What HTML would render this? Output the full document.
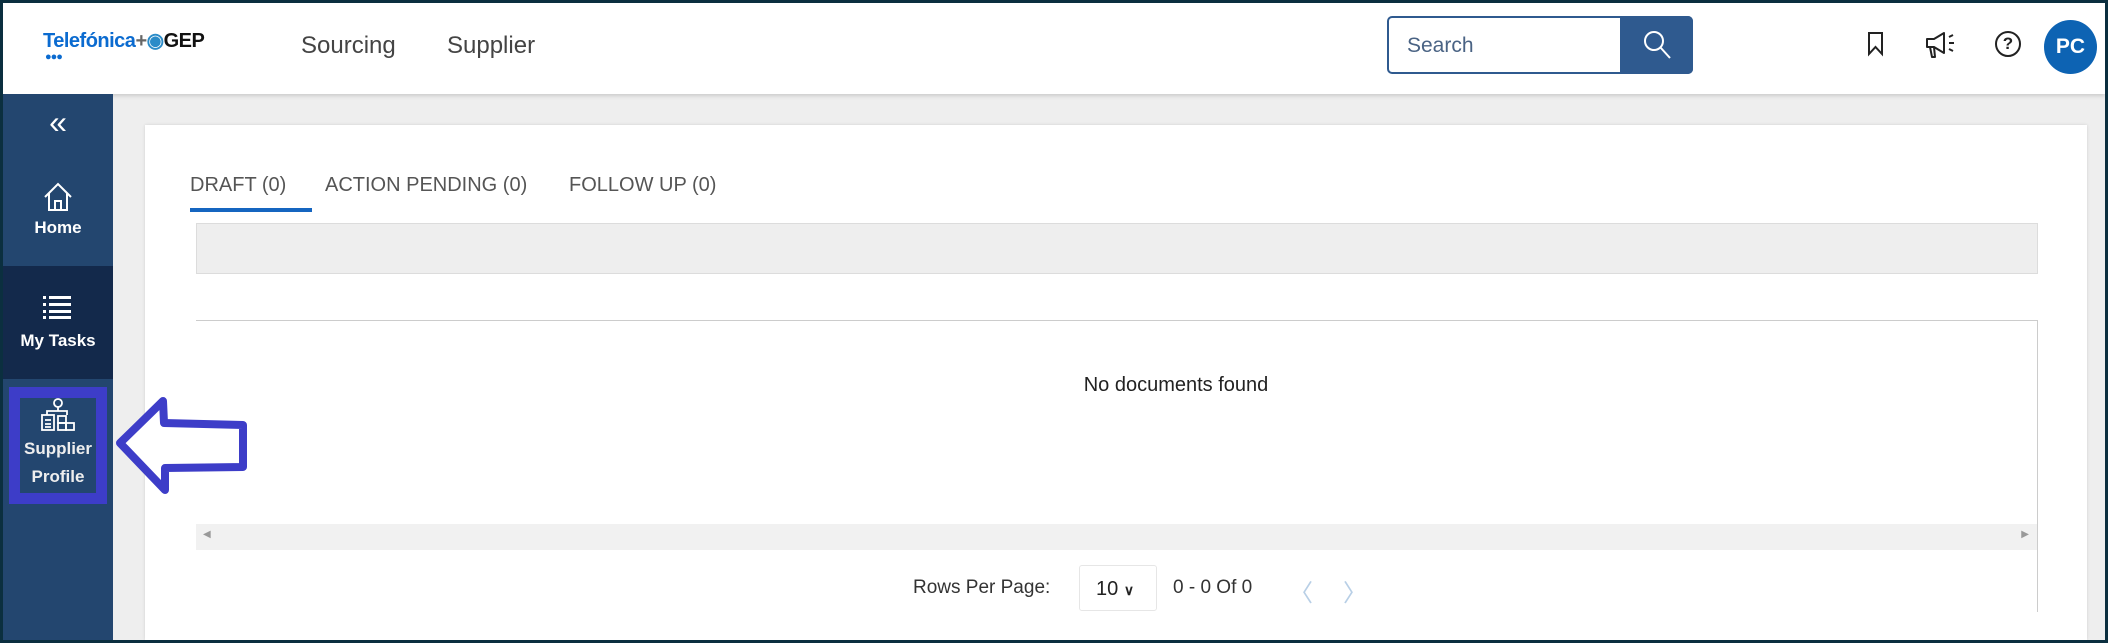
<!DOCTYPE html>
<html><head><meta charset="utf-8"><style>
*{box-sizing:border-box;margin:0;padding:0}
body{width:2108px;height:643px;overflow:hidden;font-family:"Liberation Sans",Arial,sans-serif;background:#0b2f3f;position:relative}
.frame{position:absolute;left:3px;top:3px;right:3px;bottom:3px;background:#eeeeee;overflow:hidden}
.hdr{position:absolute;left:0;top:0;right:0;height:91px;background:#fff;box-shadow:0 2px 4px rgba(0,0,0,.15);z-index:2}
.abs{position:absolute}
.nav{font-size:24px;color:#444;top:29px}
.side{position:absolute;left:0;top:91px;width:110px;bottom:0;background:#23466f;z-index:3}
.card{position:absolute;left:142px;top:122px;right:18px;bottom:0;background:#fff;box-shadow:0 0 3px rgba(0,0,0,.12)}
.tab{position:absolute;top:49px;font-size:20px;color:#555}
.st{color:#fff;font-size:17px;font-weight:bold;text-align:center;width:110px;position:absolute;left:0}
</style></head><body><div class="frame">
<div class="hdr">
 <div class="abs" style="left:40px;top:25px;font-size:20px;font-weight:bold;color:#0b6bd0;letter-spacing:-0.5px">Telefónica<span style="color:#666">+</span><span style="color:#2a8bc8">&#9673;</span><span style="color:#111">GEP</span></div>
 <div class="abs" style="left:42px;top:48px;font-size:11px;color:#0b6bd0;letter-spacing:-1px">●●●</div>
 <div class="abs nav" style="left:298px">Sourcing</div>
 <div class="abs nav" style="left:444px">Supplier</div>
 <div class="abs" style="left:1384px;top:13px;width:306px;height:58px;border:2px solid #2f5a8f;border-radius:5px;background:#fff"></div>
 <div class="abs" style="left:1404px;top:31px;font-size:21px;color:#4a6384">Search</div>
 <div class="abs" style="left:1617px;top:13px;width:73px;height:58px;background:#2f5a8f;border-radius:0 5px 5px 0"></div>
 <svg class="abs" style="left:1638px;top:26px" width="34" height="34" viewBox="0 0 34 34"><circle cx="13" cy="12" r="9" fill="none" stroke="#fff" stroke-width="2"/><line x1="19.5" y1="18.5" x2="29" y2="29" stroke="#fff" stroke-width="2"/></svg>
 <svg class="abs" style="left:1863px;top:28px" width="20" height="26" viewBox="0 0 20 26"><path d="M3 2H16V23L9.5 16L3 23Z" fill="none" stroke="#222" stroke-width="2"/></svg>
 <svg class="abs" style="left:1921px;top:28px" width="34" height="28" viewBox="0 0 34 28"><path d="M3 8H10L20 2V22L10 16H3Z M6 16L8 26H11L10 16" fill="none" stroke="#222" stroke-width="2" stroke-linejoin="round"/><path d="M25 6L29 4M25 12H30M25 18L29 20" stroke="#222" stroke-width="2"/></svg>
 <div class="abs" style="left:1992px;top:28px;width:26px;height:26px;border:2px solid #222;border-radius:50%;text-align:center;font-size:17px;font-weight:bold;line-height:22px;color:#222">?</div>
 <div class="abs" style="left:2041px;top:17px;width:53px;height:54px;border-radius:50%;background:#0d63b3;color:#fff;font-weight:bold;font-size:21px;text-align:center;line-height:54px">PC</div>
</div>
<div class="side">
 <div class="abs" style="left:0;top:0;width:110px;height:172px;background:#23466f"></div>
 <div class="st" style="top:10px;font-size:32px;font-weight:normal">«</div>
 <svg class="abs" style="left:38px;top:87px" width="34" height="32" viewBox="0 0 34 32"><path d="M4 16L17 3L30 16M8 12V29H26V12M14 29V20H20V29" fill="none" stroke="#fff" stroke-width="2"/></svg>
 <div class="st" style="top:124px">Home</div>
 <div class="abs" style="left:0;top:172px;width:110px;height:113px;background:#13294b"></div>
 <svg class="abs" style="left:38px;top:200px" width="34" height="26" viewBox="0 0 34 26"><g fill="#fff"><rect x="2" y="2" width="3" height="3"/><rect x="2" y="9" width="3" height="3"/><rect x="2" y="16" width="3" height="3"/><rect x="2" y="22" width="3" height="3"/><rect x="8" y="2" width="22" height="3"/><rect x="8" y="9" width="22" height="3"/><rect x="8" y="16" width="22" height="3"/><rect x="8" y="22" width="22" height="3"/></g></svg>
 <div class="st" style="top:237px">My Tasks</div>
 <div class="abs" style="left:6px;top:293px;width:98px;height:117px;border:11px solid #3d3dc8;background:#23466f"></div>
 <svg class="abs" style="left:36px;top:303px" width="38" height="36" viewBox="0 0 38 36"><g fill="none" stroke="#fff" stroke-width="1.8"><circle cx="19" cy="6" r="4"/><path d="M19 10V14M8 18V14H28V18"/><rect x="3" y="18" width="12" height="15"/><path d="M6 23H12M6 27H12M6 30H12"/><rect x="19" y="19" width="8" height="7"/><rect x="19" y="26" width="8" height="7"/><rect x="27" y="26" width="8" height="7"/></g></svg>
 <div class="st" style="top:345px;color:#eee">Supplier</div>
 <div class="st" style="top:373px;color:#eee">Profile</div>
</div>
<div class="card">
 <div class="tab" style="left:45px">DRAFT (0)</div>
 <div class="abs" style="left:45px;top:83px;width:122px;height:4px;background:#1565c0"></div>
 <div class="tab" style="left:180px">ACTION PENDING (0)</div>
 <div class="tab" style="left:424px">FOLLOW UP (0)</div>
 <div class="abs" style="left:51px;top:98px;right:49px;height:51px;background:#eeeeee;border:1px solid #dcdcdc"></div>
 <div class="abs" style="left:51px;top:195px;right:49px;height:1px;background:#ccc"></div>
 <div class="abs" style="right:49px;top:195px;width:1px;height:292px;background:#ccc"></div>
 <div class="abs" style="left:0;right:0;top:249px;text-align:center;font-size:20px;color:#222;padding-left:120px">No documents found</div>
 <div class="abs" style="left:51px;top:399px;right:50px;height:26px;background:#f1f1f1"></div>
 <div class="abs" style="left:58px;top:404px;font-size:10px;color:#999">◀</div>
 <div class="abs" style="right:58px;top:404px;font-size:10px;color:#999">▶</div>
 <div class="abs" style="left:768px;top:452px;font-size:19px;color:#333">Rows Per Page:</div>
 <div class="abs" style="left:934px;top:440px;width:78px;height:46px;border:1px solid #e6e6e6;border-radius:3px;font-size:20px;color:#222;padding:12px 0 0 16px">10 <span style="font-size:14px;font-weight:bold">&#8744;</span></div>
 <div class="abs" style="left:1028px;top:452px;font-size:19px;color:#333">0 - 0 Of 0</div>
 <div class="abs" style="left:1144px;top:448px;font-size:24px;color:#b8cfe6">〈</div>
 <div class="abs" style="left:1198px;top:448px;font-size:24px;color:#b8cfe6">〉</div>
</div>
<svg class="abs" style="left:0;top:0;z-index:4" width="2102" height="637"><path d="M117 440L160 398L161 420L240 422L240 464L162 465L162 487Z" fill="#fff" stroke="#3d3dc8" stroke-width="8" stroke-linejoin="round"/></svg>
</div></body></html>
